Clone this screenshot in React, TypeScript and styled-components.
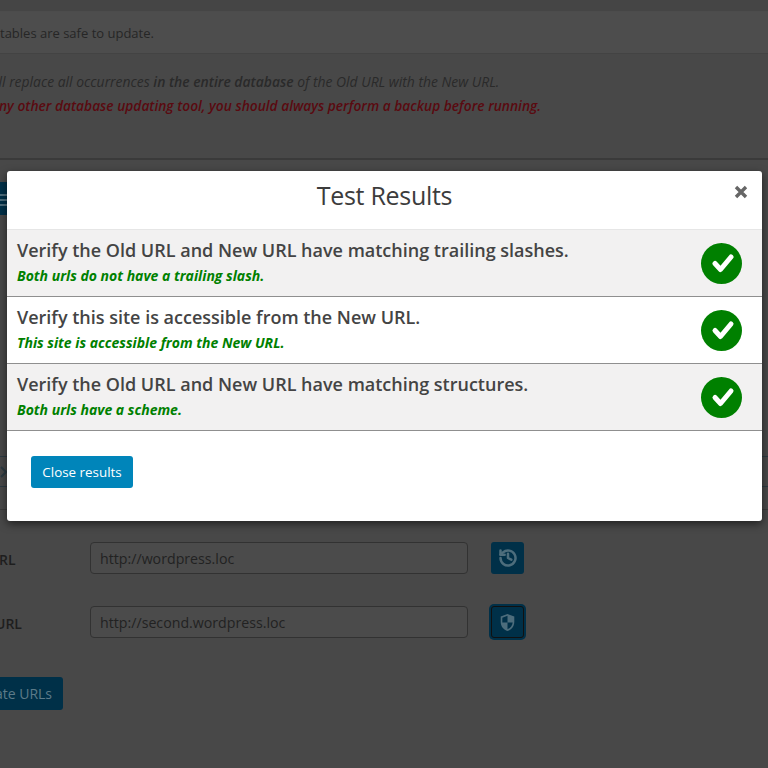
import React from 'react';
import styled, { createGlobalStyle } from 'styled-components';

const checks = [
  { title: 'Verify the Old URL and New URL have matching trailing slashes.', result: 'Both urls do not have a trailing slash.', shaded: true },
  { title: 'Verify this site is accessible from the New URL.', result: 'This site is accessible from the New URL.', shaded: false },
  { title: 'Verify the Old URL and New URL have matching structures.', result: 'Both urls have a scheme.', shaded: true }
];

const GlobalStyle = createGlobalStyle`
  html, body {
    margin: 0;
    height: 100%;
    overflow: hidden;
    background: #484848;
  }
  * {
    box-sizing: border-box;
  }
`;

const Page = styled.div`
  position: relative;
  width: 768px;
  height: 768px;
  overflow: hidden;
  background: #484848;
  color: #1e1e1e;
  font-family: 'Open Sans', 'Noto Sans', sans-serif;
`;

const TopBar = styled.div`
  height: 12px;
  background: #454545;
  border-bottom: 1px solid #4c4c4c;
`;

const SafeRow = styled.div`
  height: 42px;
  display: flex;
  align-items: center;
  background: #4d4d4d;
  border-bottom: 1px solid #434343;
  font-size: 13px;
  color: #262626;
  white-space: nowrap;
`;

const Notes = styled.div`
  height: 106px;
  padding-top: 16px;
  border-bottom: 2px solid #3a3a3a;
  font-size: 14px;
  font-style: italic;
  white-space: nowrap;
  b {
    font-weight: 600;
  }
`;

const Note = styled.div<{ $warn?: boolean; $indent: number }>`
  height: 24px;
  line-height: 24px;
  margin-left: ${p => p.$indent}px;
  font-size: ${p => (p.$warn ? '13.75px' : '13.9px')};
  color: ${p => (p.$warn ? '#5a0a10' : '#2a2a2a')};
  font-weight: ${p => (p.$warn ? 600 : 400)};
`;

const Form = styled.div`
  padding-top: 22px;
  display: flex;
  flex-direction: column;
`;

const MenuButton = styled.div`
  width: 12px;
  height: 33px;
  padding: 12px 0 0;
  display: flex;
  flex-direction: column;
  gap: 3px;
  background: #003048;
`;

const MenuBar = styled.div`
  height: 2px;
  background: #4d6d7c;
`;

const Pager = styled.div`
  height: 31px;
  margin-top: 241px;
  display: flex;
  align-items: center;
  border-top: 1px solid #2c3a42;
  border-bottom: 1px solid #2c3a42;
`;

const SectionRule = styled.div`
  height: 1px;
  margin-top: 22px;
  background: #3a3a3a;
`;

const FormRow = styled.div`
  display: flex;
  align-items: center;
  height: 32px;
  margin-top: 32px;
`;

const FieldLabel = styled.div<{ $shift: number }>`
  width: 90px;
  font-size: 14px;
  font-weight: 600;
  color: #1e1e1e;
  text-indent: ${p => p.$shift}px;
  padding-top: 2px;
  white-space: nowrap;
`;

const UrlInput = styled.div`
  width: 378px;
  height: 32px;
  padding: 0 9px;
  display: flex;
  align-items: center;
  border: 1px solid #323232;
  border-radius: 4px;
  background: #4b4b4b;
  font-size: 14.2px;
  color: #222;
`;

const IconButton = styled.div<{ $focused?: boolean }>`
  width: 33px;
  height: 32px;
  margin-left: 23px;
  display: flex;
  align-items: center;
  justify-content: center;
  border-radius: 3px;
  background: #003048;
  color: #4d6d7c;
  ${p => p.$focused && 'border: 1px solid #111; box-shadow: 0 0 0 2px #003048;'}
`;

const UpdateButton = styled.div`
  width: 63px;
  height: 33px;
  margin-top: 39px;
  display: flex;
  align-items: center;
  justify-content: flex-end;
  padding-right: 11px;
  border-radius: 0 3px 3px 0;
  background: #003048;
  font-size: 14px;
  color: #5d7b89;
  white-space: nowrap;
`;

const Modal = styled.div`
  position: absolute;
  top: 171px;
  left: 7px;
  width: 755px;
  height: 350px;
  background: #fff;
  border-radius: 3px;
  box-shadow: 0 3px 8px rgba(0, 0, 0, 0.55);
`;

const ModalHeader = styled.div`
  position: relative;
  height: 59px;
  display: flex;
  align-items: center;
  justify-content: center;
  padding-bottom: 11px;
  font-size: 25px;
  letter-spacing: -0.3px;
  color: #3c3c3c;
  border-bottom: 1px solid #e6e6e6;
`;

const CloseIcon = styled.svg`
  position: absolute;
  top: 14px;
  right: 14px;
  width: 14px;
  height: 14px;
  color: #666;
`;

const CheckRow = styled.div<{ $shaded: boolean }>`
  height: 67px;
  padding: 8px 20px 0 10px;
  display: flex;
  align-items: flex-start;
  justify-content: space-between;
  background: ${p => (p.$shaded ? '#f2f1f1' : '#fff')};
  border-bottom: 1px solid #8f8f8f;
`;

const CheckTitle = styled.div`
  font-size: 18px;
  line-height: 24px;
  font-weight: 600;
  color: #444;
  white-space: nowrap;
`;

const CheckResult = styled.div`
  margin-top: 4px;
  font-size: 14px;
  line-height: 20px;
  font-weight: 700;
  font-style: italic;
  color: #008000;
  white-space: nowrap;
`;

const CheckBadge = styled.svg`
  width: 41px;
  height: 41px;
  margin-top: 5px;
  flex-shrink: 0;
`;

const ModalFooter = styled.div`
  padding: 25px 24px;
`;

const CloseButton = styled.div`
  width: 102px;
  height: 32px;
  display: flex;
  align-items: center;
  justify-content: center;
  border-radius: 3px;
  background: #0085ba;
  color: #fff;
  font-size: 13.4px;
`;

const App: React.FC = () => {
  return (
    <Page>
      <GlobalStyle />
      <TopBar />
      <SafeRow>tables are safe to update.</SafeRow>
      <Notes>
        <Note $indent={-5}>
          ill replace all occurrences <b>in the entire database</b> of the Old URL with the New URL.
        </Note>
        <Note $warn $indent={-1}>
          ny other database updating tool, you should always perform a backup before running.
        </Note>
      </Notes>
      <Form>
        <MenuButton>
          <MenuBar />
          <MenuBar />
          <MenuBar />
        </MenuButton>
        <Pager>
          <svg width="7" height="12" viewBox="0 0 7 12" fill="none" stroke="#2c3a42" strokeWidth="2">
            <path d="M1 1l5 5-5 5" />
          </svg>
        </Pager>
        <SectionRule />
        <FormRow>
          <FieldLabel $shift={-1}>RL</FieldLabel>
          <UrlInput>http://wordpress.loc</UrlInput>
          <IconButton>
            <svg width="20" height="20" viewBox="0 0 24 24" fill="none" stroke="currentColor" strokeWidth="3" strokeLinecap="round" strokeLinejoin="round">
              <path d="M3 12a9 9 0 1 0 3-6.700L3 8" />
              <path d="M3 3v5h5" />
              <path d="M12 7v5l4 2" />
            </svg>
          </IconButton>
        </FormRow>
        <FormRow>
          <FieldLabel $shift={-5}>URL</FieldLabel>
          <UrlInput>http://second.wordpress.loc</UrlInput>
          <IconButton $focused>
            <svg width="17" height="19" viewBox="0 0 20 22" fill="currentColor">
              <path d="M10 1 2 4v6c0 5.500 3.400 9.500 8 11 4.600-1.500 8-5.500 8-11V4z" />
              <path d="M10 3.200V11H3.900V5.400zM10 11h6.100c-.3 3.700-2.800 6.600-6.100 7.900z" fill="#003048" />
            </svg>
          </IconButton>
        </FormRow>
        <UpdateButton>ate URLs</UpdateButton>
      </Form>
      <Modal>
        <ModalHeader>
          Test Results
          <CloseIcon viewBox="0 0 14 14" fill="none" stroke="currentColor" strokeWidth="3.400">
            <path d="M2 2l10 10M12 2 2 12" />
          </CloseIcon>
        </ModalHeader>
        {checks.map(c => (
          <CheckRow key={c.title} $shaded={c.shaded}>
            <div>
              <CheckTitle>{c.title}</CheckTitle>
              <CheckResult>{c.result}</CheckResult>
            </div>
            <CheckBadge viewBox="0 0 41 41">
              <circle cx="20.500" cy="20.500" r="20.500" fill="#008000" />
              <path d="M14 20.500l5.500 6L30 14" fill="none" stroke="#fff" strokeWidth="5" strokeLinecap="round" strokeLinejoin="round" />
            </CheckBadge>
          </CheckRow>
        ))}
        <ModalFooter>
          <CloseButton>Close results</CloseButton>
        </ModalFooter>
      </Modal>
    </Page>
  );
};

export default App;
